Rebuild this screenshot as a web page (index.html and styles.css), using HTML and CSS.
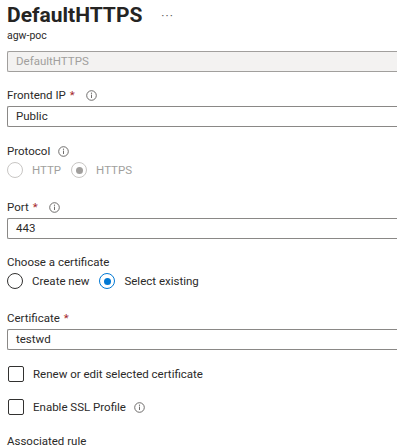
FILE: index.html
```html
<!DOCTYPE html>
<html>
<head>
<meta charset="utf-8">
<link rel="stylesheet" href="styles.css">
</head>
<body>
<div class="page">
  <div class="head">
    <h1 class="title">DefaultHTTPS</h1>
    <span class="more">···</span>
  </div>
  <div class="sub">agw-poc</div>
  <div class="input disabled">DefaultHTTPS</div>

  <div class="field f-frontend">
    <div class="label">Frontend IP<span class="req">*</span>
      <svg class="info" width="11" height="11" viewBox="0 0 11 11"><circle cx="5.5" cy="5.5" r="4.8" fill="none" stroke="#605e5c" stroke-width="0.9"/><line x1="5.5" y1="4.6" x2="5.5" y2="8" stroke="#605e5c" stroke-width="0.9"/><circle cx="5.5" cy="3.2" r="0.6" fill="#605e5c"/></svg>
    </div>
    <div class="input">Public</div>
  </div>

  <div class="field f-protocol">
    <div class="label tight">Protocol
      <svg class="info" width="11" height="11" viewBox="0 0 11 11"><circle cx="5.5" cy="5.5" r="4.8" fill="none" stroke="#605e5c" stroke-width="0.9"/><line x1="5.5" y1="4.6" x2="5.5" y2="8" stroke="#605e5c" stroke-width="0.9"/><circle cx="5.5" cy="3.2" r="0.6" fill="#605e5c"/></svg>
    </div>
    <div class="radios">
      <span class="radio-item dis"><span class="radio"></span>HTTP</span>
      <span class="radio-item dis"><span class="radio on"></span>HTTPS</span>
    </div>
  </div>

  <div class="field f-port">
    <div class="label">Port<span class="req">*</span>
      <svg class="info" width="11" height="11" viewBox="0 0 11 11"><circle cx="5.5" cy="5.5" r="4.8" fill="none" stroke="#605e5c" stroke-width="0.9"/><line x1="5.5" y1="4.6" x2="5.5" y2="8" stroke="#605e5c" stroke-width="0.9"/><circle cx="5.5" cy="3.2" r="0.6" fill="#605e5c"/></svg>
    </div>
    <div class="input">443</div>
  </div>

  <div class="field f-choose">
    <div class="label tight">Choose a certificate</div>
    <div class="radios">
      <span class="radio-item"><span class="radio"></span>Create new</span>
      <span class="radio-item"><span class="radio sel"></span>Select existing</span>
    </div>
  </div>

  <div class="field f-cert">
    <div class="label">Certificate<span class="req">*</span></div>
    <div class="input">testwd</div>
  </div>

  <div class="check-row c1"><span class="box"></span>Renew or edit selected certificate</div>
  <div class="check-row c2"><span class="box"></span>Enable SSL Profile
    <svg class="info" width="11" height="11" viewBox="0 0 11 11"><circle cx="5.5" cy="5.5" r="4.8" fill="none" stroke="#605e5c" stroke-width="0.9"/><line x1="5.5" y1="4.6" x2="5.5" y2="8" stroke="#605e5c" stroke-width="0.9"/><circle cx="5.5" cy="3.2" r="0.6" fill="#605e5c"/></svg>
  </div>

  <div class="label assoc">Associated rule</div>
</div>
</body>
</html>
```

FILE: styles.css
```css
html, body {
  margin: 0;
  padding: 0;
  background: #fff;
  overflow: hidden;
}
.page {
  font-family: Roboto, "Open Sans", sans-serif;
  font-size: 11.5px;
  color: #2b2a29;
  padding-left: 7px;
  width: 420px;
}
.head {
  display: flex;
  align-items: center;
  height: 30px;
}
.title {
  margin: 0;
  font-size: 21px;
  font-weight: 700;
  line-height: 30px;
  color: #252423;
}
.more {
  margin-left: 19px;
  font-size: 12px;
  color: #605e5c;
  letter-spacing: 1px;
  margin-top: 1px;
}
.sub {
  font-size: 10.5px;
  line-height: 14px;
  margin-top: -1px;
}
.input {
  box-sizing: border-box;
  height: 21px;
  width: 400px;
  border: 1px solid #8a8886;
  border-right: none;
  border-radius: 2px 0 0 2px;
  padding-left: 8px;
  line-height: 19px;
  font-size: 11.5px;
  color: #2b2a29;
}
.input.disabled {
  margin-top: 8px;
  background: #f3f2f1;
  color: #a19f9d;
  border-color: #a19f9d;
}
.label {
  line-height: 18px;
  height: 18px;
  display: flex;
  align-items: center;
  margin-bottom: 2px;
}
.label.tight { margin-bottom: 0; }
.req {
  color: #a4262c;
  margin-left: 4px;
  margin-right: 11px;
}
.label .info { margin-left: 8px; }
.req + .info { margin-left: 0; }
.f-frontend { margin-top: 14px; }
.f-protocol { margin-top: 15px; }
.f-port { margin-top: 18px; }
.f-choose { margin-top: 14px; }
.f-cert { margin-top: 18px; }
.radios {
  display: flex;
  align-items: center;
  height: 20px;
}
.radio-item {
  display: flex;
  align-items: center;
  margin-right: 10px;
}
.radio {
  box-sizing: border-box;
  width: 16px;
  height: 16px;
  border-radius: 50%;
  border: 1px solid #323130;
  margin-right: 9px;
  position: relative;
}
.radio.sel { border-color: #0078d4; }
.radio.sel::after, .radio.on::after {
  content: "";
  position: absolute;
  left: 3.5px; top: 3.5px;
  width: 7px; height: 7px;
  border-radius: 50%;
  background: #0078d4;
}
.dis { color: #a19f9d; }
.dis .radio { border-color: #c8c6c4; }
.dis .radio.on::after { background: #a19f9d; }
.check-row {
  display: flex;
  align-items: center;
  height: 20px;
}
.check-row .box {
  box-sizing: border-box;
  width: 16px;
  height: 16px;
  border: 1px solid #323130;
  border-radius: 2px;
  margin: 0 9px 0 1px;
}
.check-row .info { margin-left: 8px; }
.c1 { margin-top: 14px; }
.c2 { margin-top: 13px; }
.assoc { margin-top: 15px; }
```
